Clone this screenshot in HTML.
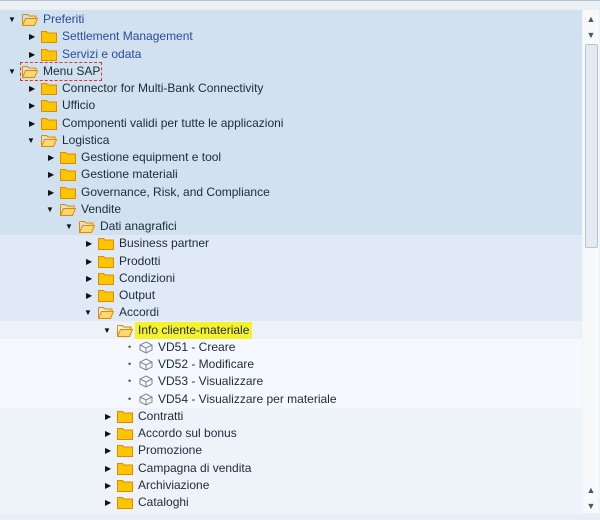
<!DOCTYPE html>
<html><head><meta charset="utf-8"><style>
body{margin:0;width:600px;height:520px;overflow:hidden;background:#edf2f9;font-family:"Liberation Sans",sans-serif;font-size:12px;position:relative}
.b{position:absolute;left:0;width:582px}
.r{position:absolute;height:17px;line-height:17px;white-space:nowrap;color:#1c2a3a}
.r svg{position:absolute;top:2px}
.t{position:absolute;top:0}
.blue{color:#2a4d98}
.sb{position:absolute;left:583px;width:16px}
.ar{color:#111}
</style></head><body>
<div style="position:absolute;left:0;top:0;width:600px;height:10px;background:#ebf0f5;border-top:1px solid #b4c2d0"></div>
<div class="b" style="top:10px;height:225px;background:#d1e1ef"></div>
<div class="b" style="top:235px;height:86px;background:#e0eaf6"></div>
<div class="b" style="top:321px;height:18px;background:#edf2fa"></div>
<div class="b" style="top:339px;height:69px;background:#f5f8fd"></div>
<div class="b" style="top:408px;height:106px;background:#eef3fa"></div>
<div style="position:absolute;left:0;top:514px;width:600px;height:6px;background:#e8eef5"></div>
<div class="sb" style="top:10px;height:503px;background:#f8f9fa"></div>
<div class="sb" style="top:12px;height:14px;text-align:center;font-size:9px;color:#4a5a6a;line-height:14px">▲</div>
<div class="sb" style="top:28px;height:14px;text-align:center;font-size:9px;color:#4a5a6a;line-height:14px">▼</div>
<div style="position:absolute;left:585px;top:44px;width:11px;height:202px;background:#e3eaf2;border:1px solid #b8c4d0;border-radius:2px"></div>
<div class="sb" style="top:483px;height:14px;text-align:center;font-size:9px;color:#4a5a6a;line-height:14px">▲</div>
<div class="sb" style="top:499px;height:14px;text-align:center;font-size:9px;color:#4a5a6a;line-height:14px">▼</div>
<div id="tree"></div>
<script>
var rows=[[0,'o','Preferiti',1],[1,'c','Settlement Management',1],[1,'c','Servizi e odata',1],[0,'o','Menu SAP',2],
[1,'c','Connector for Multi-Bank Connectivity'],[1,'c','Ufficio'],[1,'c','Componenti validi per tutte le applicazioni'],[1,'o','Logistica'],
[2,'c','Gestione equipment e tool'],[2,'c','Gestione materiali'],[2,'c','Governance, Risk, and Compliance'],[2,'o','Vendite'],
[3,'o','Dati anagrafici'],[4,'c','Business partner'],[4,'c','Prodotti'],[4,'c','Condizioni'],[4,'c','Output'],[4,'o','Accordi'],
[5,'o','Info cliente-materiale',3],[6,'l','VD51 - Creare'],[6,'l','VD52 - Modificare'],[6,'l','VD53 - Visualizzare'],[6,'l','VD54 - Visualizzare per materiale'],
[5,'c','Contratti'],[5,'c','Accordo sul bonus'],[5,'c','Promozione'],[5,'c','Campagna di vendita'],[5,'c','Archiviazione'],[5,'c','Cataloghi']];
var fClosed='<svg width="16" height="13" viewBox="0 0 16 13"><path d="M0.5 1.5h5l1.5 1.5h8.5v9.5h-15z" fill="#fbc600" stroke="#e38b00"/></svg>';
var fOpen='<svg width="16" height="13" viewBox="0 0 16 13"><path d="M0.5 1.5h5l1.5 1.5h7v2.5" fill="#fdd870" stroke="#e38b00"/><path d="M0.5 1.5v11h12l3-7h-12l-3 7" fill="#fdd870" stroke="#e38b00"/></svg>';
var fLeaf='<svg width="14" height="13" viewBox="0 0 14 13"><path d="M7 1l6 3v5l-6 3l-6-3v-5z M1 4l6 3l6-3 M7 7v5" fill="none" stroke="#7d8590"/></svg>';
var h='';
rows.forEach(function(r,i){
 var top=11+17.25*i, x=13+19*r[0];
 var s='<div class="r'+(r[3]==1?' blue':'')+'" style="top:'+top+'px;left:0;width:580px">';
 if(r[1]=='c') s+='<div class="t ar" style="left:'+(x-3)+'px;font-size:8px">▶</div>';
 else if(r[1]=='o') s+='<div class="t ar" style="left:'+(x-5)+'px;font-size:8px">▼</div>';
 else s+='<div class="t" style="left:'+(x+1)+'px;font-size:9px;color:#555">•</div>';
 if(r[1]=='l'){s+='<span style="position:absolute;left:'+(x+12)+'px;top:0">'+fLeaf+'</span>';}
 else s+='<span style="position:absolute;left:'+(x+9)+'px;top:0">'+(r[1]=='c'?fClosed:fOpen)+'</span>';
 var tx=r[1]=='l'?x+31:x+30;
 var st='';
 if(r[3]==2) st='outline:1px dashed #d33;left:'+(x+8)+'px;padding-left:'+(tx-x-8)+'px;padding-right:1px;';
 else if(r[3]==3) st='background:#f6f22a;left:'+(tx-3)+'px;padding:0 3px;';
 else st='left:'+tx+'px;';
 s+='<div class="t" style="'+st+'">'+r[2]+'</div></div>';
 h+=s;
});
document.getElementById('tree').innerHTML=h;
</script>
</body></html>
